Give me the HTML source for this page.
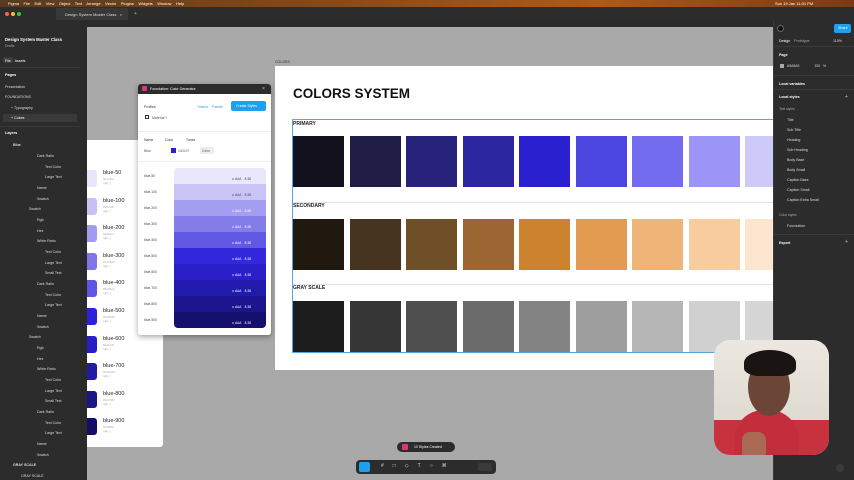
<!DOCTYPE html>
<html><head><meta charset="utf-8"><style>
*{margin:0;padding:0;box-sizing:border-box}
body{width:854px;height:480px;overflow:hidden;background:#a9a9a9;font-family:"Liberation Sans",sans-serif;position:relative}
.a{position:absolute}
.t{position:absolute;white-space:nowrap}
.ly{position:absolute;font-size:3.6px;color:#ddd;white-space:nowrap}
.sw{position:absolute;width:51px;height:51px}
.rs{position:absolute;font-size:3.6px;color:#ddd;left:787px}
</style></head><body>
<!-- menu bar -->
<div class="a" style="left:0;top:0;width:854px;height:7px;background:linear-gradient(90deg,#5a3a1c,#8a4a18 40%,#b05a16 70%,#7a3a18)"></div>
<div class="t" style="left:8px;top:1px;font-size:4px;color:#fff">  Figma &nbsp;&nbsp; File &nbsp;&nbsp; Edit &nbsp;&nbsp; View &nbsp;&nbsp; Object &nbsp;&nbsp; Text &nbsp;&nbsp; Arrange &nbsp;&nbsp; Vector &nbsp;&nbsp; Plugins &nbsp;&nbsp; Widgets &nbsp;&nbsp; Window &nbsp;&nbsp; Help</div>
<div class="t" style="left:775px;top:1px;font-size:4px;color:#fff">Sun 19 Jan 11:01 PM</div>
<!-- tab bar -->
<div class="a" style="left:0;top:7px;width:854px;height:13px;background:#2c2c2c"></div>
<div class="a" style="left:5px;top:12px;width:4px;height:4px;border-radius:50%;background:#ff5f57"></div>
<div class="a" style="left:11px;top:12px;width:4px;height:4px;border-radius:50%;background:#febc2e"></div>
<div class="a" style="left:17px;top:12px;width:4px;height:4px;border-radius:50%;background:#28c840"></div>
<div class="a" style="left:56px;top:8px;width:72px;height:12px;background:#383838"></div>
<div class="t" style="left:65px;top:12px;font-size:4px;color:#ddd">Design System Master Class &nbsp; ×</div>
<div class="t" style="left:134px;top:11px;font-size:5px;color:#aaa">+</div>
<!-- left sidebar -->
<div class="a" style="left:0;top:20px;width:80px;height:460px;background:#2c2c2c"></div>
<div class="t" style="left:5px;top:37px;font-size:4.2px;color:#fff;font-weight:bold">Design System Master Class</div>
<div class="t" style="left:5px;top:44px;font-size:3.6px;color:#aaa">Drafts</div>
<div class="a" style="left:3px;top:57px;width:10px;height:6px;background:#3d3d3d;border-radius:1px"></div>
<div class="t" style="left:5px;top:59px;font-size:3.6px;color:#fff">File &nbsp;&nbsp; Assets</div>
<div class="a" style="left:0;top:67px;width:80px;height:1px;background:#3a3a3a"></div>
<div class="t" style="left:5px;top:73px;font-size:3.8px;color:#fff;font-weight:bold">Pages</div>
<div class="t" style="left:5px;top:85px;font-size:3.6px;color:#ddd">Presentation</div>
<div class="t" style="left:5px;top:95px;font-size:3.6px;color:#ddd">FOUNDATIONS</div>
<div class="t" style="left:11px;top:106px;font-size:3.6px;color:#ddd">+ Typography</div>
<div class="a" style="left:3px;top:114px;width:74px;height:8px;background:#3a3a3a;border-radius:1px"></div>
<div class="t" style="left:11px;top:116px;font-size:3.6px;color:#fff">+ Colors</div>
<div class="a" style="left:0;top:126px;width:80px;height:1px;background:#3a3a3a"></div>
<div class="t" style="left:5px;top:131px;font-size:3.8px;color:#fff;font-weight:bold">Layers</div>
<div class="ly" style="left:13px;top:143px;font-weight:bold">Blue</div>
<div class="ly" style="left:37px;top:154px">Dark Ratio</div>
<div class="ly" style="left:45px;top:165px">Text Color</div>
<div class="ly" style="left:45px;top:175px">Large Text</div>
<div class="ly" style="left:37px;top:186px">Name</div>
<div class="ly" style="left:37px;top:197px">Swatch</div>
<div class="ly" style="left:29px;top:207px">Swatch</div>
<div class="ly" style="left:37px;top:218px">Rgb</div>
<div class="ly" style="left:37px;top:229px">Hex</div>
<div class="ly" style="left:37px;top:239px">White Ratio</div>
<div class="ly" style="left:45px;top:250px">Text Color</div>
<div class="ly" style="left:45px;top:261px">Large Text</div>
<div class="ly" style="left:45px;top:271px">Small Text</div>
<div class="ly" style="left:37px;top:282px">Dark Ratio</div>
<div class="ly" style="left:45px;top:293px">Text Color</div>
<div class="ly" style="left:45px;top:303px">Large Text</div>
<div class="ly" style="left:37px;top:314px">Name</div>
<div class="ly" style="left:37px;top:325px">Swatch</div>
<div class="ly" style="left:29px;top:335px">Swatch</div>
<div class="ly" style="left:37px;top:346px">Rgb</div>
<div class="ly" style="left:37px;top:357px">Hex</div>
<div class="ly" style="left:37px;top:367px">White Ratio</div>
<div class="ly" style="left:45px;top:378px">Text Color</div>
<div class="ly" style="left:45px;top:389px">Large Text</div>
<div class="ly" style="left:45px;top:399px">Small Text</div>
<div class="ly" style="left:37px;top:410px">Dark Ratio</div>
<div class="ly" style="left:45px;top:421px">Text Color</div>
<div class="ly" style="left:45px;top:431px">Large Text</div>
<div class="ly" style="left:37px;top:442px">Name</div>
<div class="ly" style="left:37px;top:453px">Swatch</div>
<div class="ly" style="left:13px;top:463px;font-weight:bold">GRAY SCALE</div>
<div class="ly" style="left:21px;top:474px">GRAY SCALE</div>
<!-- rulers -->
<div class="a" style="left:80px;top:20px;width:693px;height:7px;background:#2a2a2a"></div>
<div class="a" style="left:80px;top:20px;width:7px;height:460px;background:#2a2a2a"></div>
<!-- left list card -->
<div class="a" style="left:87px;top:140px;width:76px;height:307px;background:#fff;border-radius:0 0 3px 0"></div>
<div id="list"></div>
<!-- COLORS frame -->
<div class="t" style="left:275px;top:60px;font-size:3.5px;color:#333">COLORS</div>
<div class="a" style="left:275px;top:66px;width:498px;height:304px;background:#fff"></div>
<div class="t" style="left:293px;top:86px;font-size:13.5px;font-weight:bold;color:#111">COLORS SYSTEM</div>
<div class="a" style="left:292px;top:119px;width:482px;height:234px;border:1px solid #5aa7e0"></div>
<div class="a" style="left:293px;top:202px;width:480px;height:1px;background:#d6e8f5"></div>
<div class="a" style="left:293px;top:284px;width:480px;height:1px;background:#d6e8f5"></div>
<div class="t" style="left:293px;top:121px;font-size:5px;font-weight:bold;color:#222">PRIMARY</div>
<div class="t" style="left:293px;top:203px;font-size:5px;font-weight:bold;color:#222">SECONDARY</div>
<div class="t" style="left:293px;top:285px;font-size:5px;font-weight:bold;color:#222">GRAY SCALE</div>
<div id="sw"></div>
<!-- plugin -->
<div class="a" style="left:138px;top:84px;width:133px;height:251px;background:#fff;border-radius:3px;box-shadow:0 2px 6px rgba(0,0,0,.35);overflow:hidden">
 <div class="a" style="left:0;top:0;width:133px;height:10px;background:#2c2c2c"></div>
 <div class="a" style="left:4px;top:2px;width:5px;height:5px;background:#e0337f;border-radius:1px"></div>
 <div class="t" style="left:12px;top:3px;font-size:3.6px;color:#fff">Foundation: Color Generator</div>
 <div class="t" style="left:124px;top:2px;font-size:5px;color:#ccc">×</div>
 <div class="t" style="left:6px;top:21px;font-size:3.5px;color:#333">Profiles</div>
 <div class="t" style="left:59px;top:21px;font-size:3.5px;color:#3aa0e8">Tokens &nbsp;&nbsp; Palette</div>
 <div class="a" style="left:93px;top:17px;width:35px;height:10px;background:#1ea0f0;border-radius:2px"></div>
 <div class="t" style="left:98px;top:20px;font-size:3.5px;color:#fff">Create Styles</div>
 <div class="a" style="left:7px;top:31px;width:4px;height:4px;border:1px solid #333"></div>
 <div class="t" style="left:14px;top:32px;font-size:3.5px;color:#555">Material ˅</div>
 <div class="a" style="left:0;top:47px;width:133px;height:1px;background:#eee"></div>
 <div class="t" style="left:6px;top:54px;font-size:3.5px;color:#333">Name &nbsp;&nbsp;&nbsp;&nbsp;&nbsp;&nbsp;&nbsp;&nbsp;&nbsp;&nbsp; Color &nbsp;&nbsp;&nbsp;&nbsp;&nbsp;&nbsp;&nbsp;&nbsp;&nbsp;&nbsp;&nbsp; Tones</div>
 <div class="t" style="left:6px;top:65px;font-size:3.5px;color:#555">Blue</div>
 <div class="a" style="left:33px;top:64px;width:5px;height:5px;background:#2a1fcf"></div>
 <div class="t" style="left:40px;top:65px;font-size:3.3px;color:#666">2A3007</div>
 <div class="a" style="left:62px;top:63px;width:14px;height:7px;background:#eee;border-radius:1px"></div>
 <div class="t" style="left:64px;top:65px;font-size:3.3px;color:#555">Color</div>
 <div class="a" style="left:0;top:77px;width:133px;height:1px;background:#eee"></div>
 <div id="pl"></div>
</div>
<!-- right panel -->
<div class="a" style="left:773px;top:20px;width:81px;height:460px;background:#2c2c2c;border-left:1px solid #3a3a3a"></div>
<div class="a" style="left:777px;top:25px;width:7px;height:7px;border-radius:50%;background:#111;border:1px solid #666"></div>
<div class="a" style="left:834px;top:24px;width:17px;height:9px;background:#1ea0f0;border-radius:2px"></div>
<div class="t" style="left:838px;top:26px;font-size:3.6px;color:#fff">Share</div>
<div class="t" style="left:779px;top:39px;font-size:3.6px;color:#fff">Design &nbsp;&nbsp; <span style="color:#aaa">Prototype</span></div>
<div class="t" style="left:833px;top:39px;font-size:3.6px;color:#ddd">115%</div>
<div class="a" style="left:773px;top:46px;width:81px;height:1px;background:#3a3a3a"></div>
<div class="t" style="left:779px;top:53px;font-size:3.6px;color:#fff;font-weight:bold">Page</div>
<div class="a" style="left:780px;top:64px;width:4px;height:4px;background:#a9a9a9"></div>
<div class="t" style="left:787px;top:64px;font-size:3.4px;color:#ddd">A9A9A9 &nbsp;&nbsp;&nbsp;&nbsp;&nbsp;&nbsp;&nbsp;&nbsp;&nbsp;&nbsp;&nbsp;&nbsp;&nbsp;&nbsp; 100 &nbsp; %</div>
<div class="a" style="left:773px;top:75px;width:81px;height:1px;background:#3a3a3a"></div>
<div class="t" style="left:779px;top:82px;font-size:3.6px;color:#fff;font-weight:bold">Local variables</div>
<div class="a" style="left:773px;top:89px;width:81px;height:1px;background:#3a3a3a"></div>
<div class="t" style="left:779px;top:95px;font-size:3.6px;color:#fff;font-weight:bold">Local styles</div>
<div class="t" style="left:845px;top:94px;font-size:5px;color:#ccc">+</div>
<div class="t" style="left:779px;top:107px;font-size:3.4px;color:#aaa">Text styles</div>
<div class="rs" style="top:118px">Title</div>
<div class="rs" style="top:128px">Sub Title</div>
<div class="rs" style="top:138px">Heading</div>
<div class="rs" style="top:148px">Sub Heading</div>
<div class="rs" style="top:158px">Body Base</div>
<div class="rs" style="top:168px">Body Small</div>
<div class="rs" style="top:178px">Caption Base</div>
<div class="rs" style="top:188px">Caption Small</div>
<div class="rs" style="top:198px">Caption Extra Small</div>
<div class="t" style="left:779px;top:213px;font-size:3.4px;color:#aaa">Color styles</div>
<div class="rs" style="top:224px">Foundation</div>
<div class="a" style="left:773px;top:234px;width:81px;height:1px;background:#3a3a3a"></div>
<div class="t" style="left:779px;top:241px;font-size:3.6px;color:#fff;font-weight:bold">Export</div>
<div class="t" style="left:845px;top:239px;font-size:5px;color:#ccc">+</div>
<!-- webcam -->
<div class="a" style="left:714px;top:340px;width:115px;height:115px;border-radius:16px;overflow:hidden;background:linear-gradient(180deg,#ece8e0,#d9d4cc)">
 <div class="a" style="left:0;top:80px;width:115px;height:40px;background:#c8323f"></div>
 <div class="a" style="left:20px;top:70px;width:65px;height:50px;border-radius:30px 30px 0 0;background:#c42e3c"></div>
 <div class="a" style="left:34px;top:18px;width:42px;height:58px;border-radius:50%;background:#6b4636"></div>
 <div class="a" style="left:30px;top:10px;width:52px;height:26px;border-radius:50% 50% 30% 30%;background:#1a1412"></div>
 <div class="a" style="left:28px;top:92px;width:24px;height:28px;border-radius:8px;background:#a86a55"></div>
</div>
<!-- toast + toolbar -->
<div class="a" style="left:397px;top:442px;width:58px;height:10px;background:#2c2c2c;border-radius:5px"></div>
<div class="a" style="left:402px;top:444px;width:6px;height:6px;background:#e0337f;border-radius:1px"></div>
<div class="t" style="left:414px;top:445px;font-size:3.5px;color:#fff">10 Styles Created</div>
<div class="a" style="left:356px;top:460px;width:140px;height:14px;background:#2c2c2c;border-radius:4px"></div>
<div class="a" style="left:359px;top:462px;width:11px;height:10px;background:#1ea0f0;border-radius:2px"></div>
<div class="t" style="left:381px;top:463px;font-size:5px;color:#ddd;letter-spacing:9px">#□◇T○⌘</div>
<div class="a" style="left:478px;top:463px;width:14px;height:8px;background:#3a3a3a;border-radius:2px"></div>
<div class="a" style="left:836px;top:464px;width:8px;height:8px;border-radius:50%;background:#3a3a3a"></div>
<script>
var sw='';
var rows=[["#12111d","#1f1d45","#27237a","#2c26a1","#2a20cf","#4b46e0","#736cef","#9b95f7","#cdcafa"],
["#21190f","#463420","#6e4f28","#9b6631","#cd822f","#e29b50","#efb578","#f7cd9f","#fde6cf"],
["#1d1d1d","#363636","#4f4f4f","#6b6b6b","#838383","#9e9e9e","#b6b6b6","#d0d0d0","#d6d6d6"]];
var ys=[136,219,301];
for(var r=0;r<3;r++)for(var i=0;i<9;i++){var x=293+i*56.5;var w=i==8?Math.min(51,773-x):51;sw+='<div class="sw" style="left:'+x+'px;top:'+ys[r]+'px;width:'+w+'px;background:'+rows[r][i]+'"></div>';}
document.getElementById('sw').outerHTML=sw;
var names=["50","100","200","300","400","500","600","700","800","900"];
var bc=["#e7e5fa","#c5c1f5","#a29cef","#7d75e8","#5e55e2","#2c20d8","#2a1fc5","#221aa6","#1b1587","#140f66"];
var l='';
for(var i=0;i<10;i++){var y=170+i*27.6;
l+='<div class="a" style="left:87px;top:'+y+'px;width:10px;height:17px;border-radius:0 3px 3px 0;background:'+bc[i]+'"></div>';
l+='<div class="t" style="left:103px;top:'+y+'px;font-size:5.5px;color:#222">blue-'+names[i]+'</div>';
l+='<div class="t" style="left:103px;top:'+(y+7)+'px;font-size:3px;color:#aaa">#'+bc[i].slice(1)+'</div>';
l+='<div class="t" style="left:103px;top:'+(y+11)+'px;font-size:3px;color:#aaa">rgb(..)</div>';}
document.getElementById('list').outerHTML=l;
var p='';
var pc=["#e9e7fb","#c8c4f6","#a49ef0","#847de9","#6158e3","#3328db","#2b1fca","#2219ad","#1c158f","#150f6e"];
for(var i=0;i<10;i++){var y=84+i*16;
p+='<div class="t" style="left:6px;top:'+(y+6)+'px;font-size:3.3px;color:#444">blue-'+names[i]+'</div>';
p+='<div class="a" style="left:36px;top:'+y+'px;width:92px;height:16px;background:'+pc[i]+(i==0?';border-radius:4px 4px 0 0':i==9?';border-radius:0 0 4px 4px':'')+'"></div>';
p+='<div class="t" style="left:94px;top:'+(y+9)+'px;font-size:3.2px;color:'+(i<2?'#444':'#fff')+'">•• AAA &nbsp;&nbsp; 8.38</div>';}
document.getElementById('pl').outerHTML=p;
</script>
</body></html>
